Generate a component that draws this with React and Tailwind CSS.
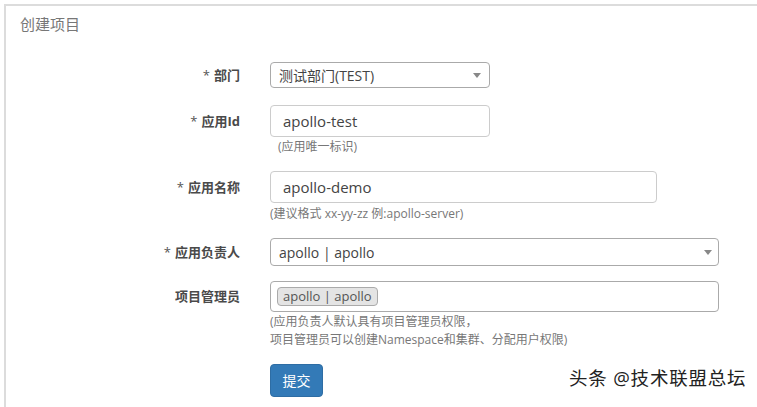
import React from "react";

const font = { fontFamily: '"Open Sans", "Noto Sans CJK SC", sans-serif' };

function Caret() {
  return (
    <svg width="8" height="5" viewBox="0 0 8 5" className="shrink-0">
      <path d="M0 0 L8 0 L4 5 Z" fill="#888" />
    </svg>
  );
}

function Label({ children, star = true }) {
  return (
    <div className="w-[234px] shrink-0 text-right text-[13px] font-bold text-[#4a4a4a] leading-none">
      {star && <span className="font-normal text-[#555] mr-[4px]">*</span>}
      {children}
    </div>
  );
}

function Help({ children, className = "" }) {
  return (
    <div className={"text-[12px] text-[#777] leading-[16px] " + className}>{children}</div>
  );
}

export default function App() {
  return (
    <div
      className="relative w-[757px] h-[407px] overflow-hidden bg-white"
      style={font}
    >
      <div className="ml-[4px] mt-[4px] w-[800px] h-[420px] border-l-2 border-t-2 border-[#dcdcdc]">
        <div className="h-[36px] flex items-center pl-[14px] text-[15px] text-[#777]">
          创建项目
        </div>

        {/* 部门 */}
        <div className="mt-[20px] flex items-center">
          <Label>部门</Label>
          <div className="ml-[30px] w-[220px] h-[26px] border border-[#aaa] rounded-[4px] flex items-center justify-between pl-[8px] pr-[8px]">
            <span className="text-[14px] text-[#444]">测试部门(TEST)</span>
            <Caret />
          </div>
        </div>

        {/* 应用Id */}
        <div className="mt-[17px] flex items-center">
          <Label>应用Id</Label>
          <div className="ml-[30px] w-[220px] h-[32px] border border-[#ccc] rounded-[4px] flex items-center pl-[12px]">
            <span className="text-[15px] text-[#444]">apollo-test</span>
          </div>
        </div>
        <div className="flex">
          <div className="w-[264px] shrink-0" />
          <Help className="mt-[2px] pl-[8px]">(应用唯一标识)</Help>
        </div>

        {/* 应用名称 */}
        <div className="mt-[16px] flex items-center">
          <Label>应用名称</Label>
          <div className="ml-[30px] w-[387px] h-[32px] border border-[#ccc] rounded-[4px] flex items-center pl-[12px]">
            <span className="text-[15px] text-[#444]">apollo-demo</span>
          </div>
        </div>
        <div className="flex">
          <div className="w-[264px] shrink-0" />
          <Help className="mt-[3px] text-[12.2px]">(建议格式 xx-yy-zz 例:apollo-server)</Help>
        </div>

        {/* 应用负责人 */}
        <div className="mt-[16px] flex items-center">
          <Label>应用负责人</Label>
          <div className="ml-[30px] w-[449px] h-[28px] border border-[#aaa] rounded-[4px] flex items-center justify-between pl-[8px] pr-[6px]">
            <span className="text-[14px] text-[#444]">apollo | apollo</span>
            <Caret />
          </div>
        </div>

        {/* 项目管理员 */}
        <div className="mt-[15px] flex items-center">
          <Label star={false}>项目管理员</Label>
          <div className="ml-[30px] w-[449px] h-[31px] border border-[#aaa] rounded-[4px] flex items-center pl-[6px]">
            <span className="h-[19px] px-[5px] flex items-center bg-[#e4e4e4] border border-[#aaa] rounded-[4px] text-[13px] text-[#555]">
              apollo | apollo
            </span>
          </div>
        </div>
        <div className="flex">
          <div className="w-[264px] shrink-0" />
          <div className="mt-[1px] text-[12px] text-[#777] leading-[18px]">
            <div>(应用负责人默认具有项目管理员权限，</div>
            <div>项目管理员可以创建Namespace和集群、分配用户权限)</div>
          </div>
        </div>

        {/* 提交 */}
        <div className="mt-[15px] flex">
          <div className="w-[264px] shrink-0" />
          <button className="w-[53px] h-[33px] bg-[#337ab7] border border-[#2e6da4] rounded-[4px] text-white text-[14px] flex items-center justify-center">
            提交
          </button>
        </div>
      </div>

      <div
        className="absolute left-[569px] top-[364px] text-[18.5px] text-[#222] tracking-[0.8px]"
        style={{ textShadow: "0 0 2px #fff, 0 0 2px #fff" }}
      >
        头条 @技术联盟总坛
      </div>
    </div>
  );
}
